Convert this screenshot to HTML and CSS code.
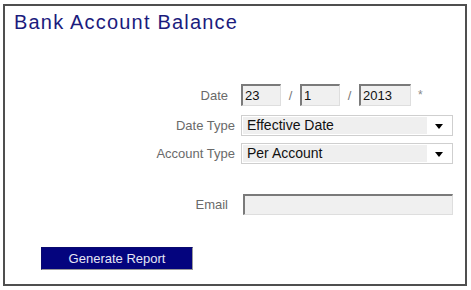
FILE: index.html
```html
<!DOCTYPE html>
<html lang="en">

<head>
    <meta charset="UTF-8">
    <title>Bank Account Balance</title>
    <link rel="stylesheet" href="styles.css">
</head>

<body>
    <div class="panel">
        <h1>Bank Account Balance</h1>

        <div class="report-form">
            <div class="row row-date">
                <span class="label label-short">Date</span>
                <div class="field">
                    <span class="text-box small">23</span>
                    <span class="sep">/</span>
                    <span class="text-box small">1</span>
                    <span class="sep">/</span>
                    <span class="text-box year">2013</span>
                    <span class="required">*</span>
                </div>
            </div>
            <div class="row row-type">
                <span class="label">Date Type</span>
                <div class="select">
                    <span class="select-value">Effective Date</span>
                    <span class="select-arrow"></span>
                </div>
            </div>
            <div class="row row-account">
                <span class="label">Account Type</span>
                <div class="select">
                    <span class="select-value">Per Account</span>
                    <span class="select-arrow"></span>
                </div>
            </div>
            <div class="row row-email">
                <span class="label label-short">Email</span>
                <span class="text-box wide"></span>
            </div>
        </div>

        <button class="generate-button">Generate Report</button>
    </div>
</body>

</html>
```

FILE: styles.css
```css
body {
    margin: 0;
    font-family: "Liberation Sans", Arial, sans-serif;
    background-color: white;
}

.panel {
    width: 460px;
    height: 278px;
    margin: 4px 0 0 3px;
    border: 2px solid #4f4f4f;
    background-color: white;
}

h1 {
    margin: 4px 0 0 9px;
    font-size: 20px;
    line-height: 24px;
    font-weight: normal;
    letter-spacing: 1.2px;
    color: #1b1b7d;
}

.report-form {
    margin-top: 50px;
}

.row {
    display: flex;
    align-items: center;
}

.row-date {
    height: 22px;
    margin-bottom: 9px;
}

.row-type {
    height: 21px;
    margin-bottom: 7px;
}

.row-account {
    height: 21px;
    margin-bottom: 30px;
}

.row-email {
    height: 21px;
}

.label {
    width: 236px;
    padding-right: 6px;
    box-sizing: border-box;
    text-align: right;
    font-size: 13px;
    color: #6a6a6a;
}

.label-short {
    padding-right: 13px;
}

.field {
    display: flex;
    align-items: center;
    height: 100%;
}

.text-box {
    box-sizing: border-box;
    height: 22px;
    padding-left: 2px;
    border-top: 2px solid #7a7a7a;
    border-left: 2px solid #7a7a7a;
    border-right: 1px solid #dedede;
    border-bottom: 1px solid #dedede;
    background-color: #f0f0f0;
    font-size: 13px;
    line-height: 19px;
    color: #111;
}

.text-box.small {
    width: 40px;
}

.text-box.year {
    width: 52px;
}

.text-box.wide {
    width: 210px;
    height: 21px;
    margin-left: 2px;
}

.sep {
    width: 19px;
    text-align: center;
    font-size: 13px;
    color: #777;
}

.required {
    margin-left: 7px;
    font-size: 12px;
    color: #888;
}

.select {
    display: flex;
    box-sizing: border-box;
    width: 212px;
    height: 21px;
    padding: 1px;
    border: 1px solid #cfcfcf;
    background-color: white;
}

.select-value {
    flex: 1;
    padding-left: 4px;
    background-color: #efefef;
    font-size: 14px;
    line-height: 17px;
    color: #111;
}

.select-arrow {
    position: relative;
    width: 24px;
}

.select-arrow::after {
    content: "";
    position: absolute;
    left: 8px;
    top: 7px;
    border-left: 4.5px solid transparent;
    border-right: 4.5px solid transparent;
    border-top: 5px solid #000;
}

.generate-button {
    display: block;
    width: 152px;
    height: 23px;
    margin: 32px 0 0 36px;
    padding: 0;
    border: 1px solid #0a0a6e;
    border-right-color: #9a9a9a;
    border-bottom-color: #9a9a9a;
    background-color: #04047e;
    color: #e6e6f5;
    font-family: "Liberation Sans", Arial, sans-serif;
    font-size: 13px;
    cursor: pointer;
}
```
